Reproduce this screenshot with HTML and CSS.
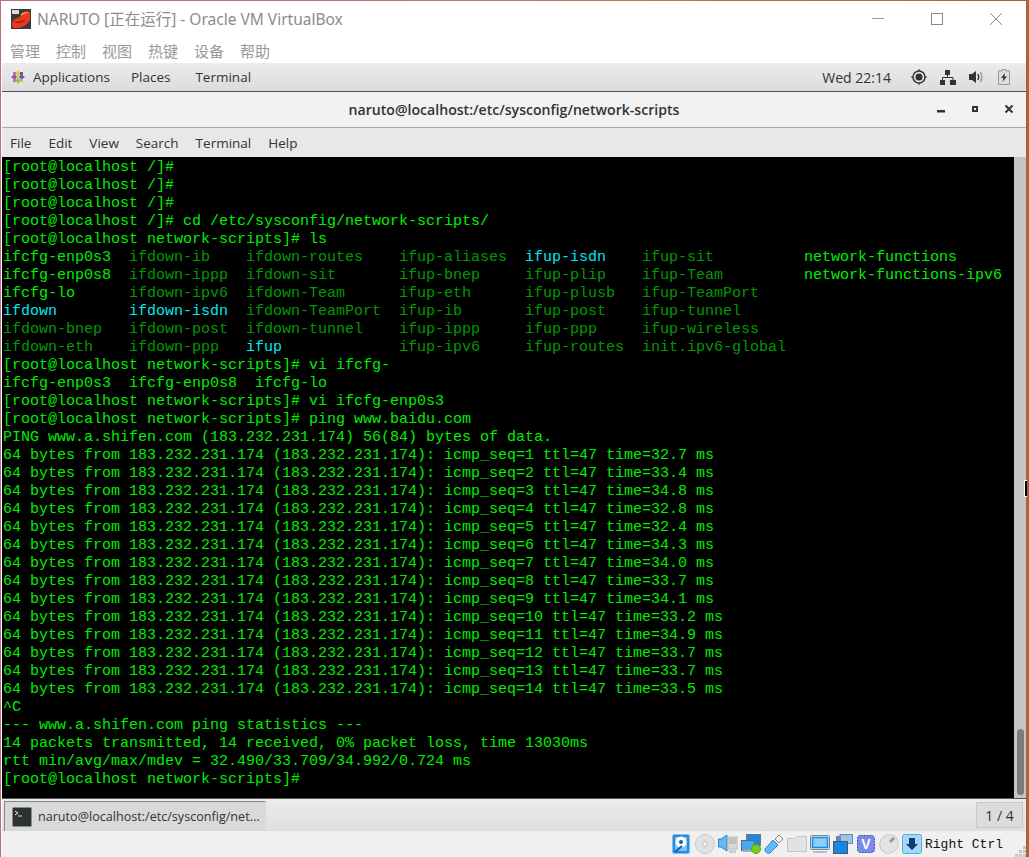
FILE: index.html
```html
<!doctype html>
<html lang="en">
<head>
  <meta charset="UTF-8">
  <title>NARUTO - Oracle VM VirtualBox</title>
  <link rel="stylesheet" href="styles.css">
</head>
<body>
  <div class="vbox">
    <!-- host window title -->
    <div class="titlebar">
      <svg class="applogo" width="20" height="20" viewBox="0 0 20 20">
        <rect width="20" height="20" fill="#3a3a3a"/>
        <rect x="1" y="1" width="7" height="4" fill="#dcdcdc"/>
        <path d="M1 14 C3 9 7 9 9 8 C10 3 15 1 19 3 L19 11 C16 17 8 20 3 19 C1 18 1 16 1 14Z" fill="#e8391a"/>
        <path d="M3 13 C7 15 12 14 15 10 C12 12 7 13 3 13Z" fill="#8e1a0c"/>
        <path d="M10 5 C12 3 16 3 18 4 C15 4 12 5 10 7Z" fill="#f9966a"/>
      </svg>
      <span class="apptitle">NARUTO [正在运行] - Oracle VM VirtualBox</span>
      <div class="winbtns">
        <svg width="14" height="14" viewBox="0 0 14 14"><path d="M1 6.5H13" stroke="#9a9a9a" fill="none"/></svg>
        <svg width="14" height="14" viewBox="0 0 14 14"><rect x="1.5" y="1.5" width="11" height="11" stroke="#8a8a8a" fill="none"/></svg>
        <svg width="14" height="14" viewBox="0 0 14 14"><path d="M1 1L13 13M13 1L1 13" stroke="#8a8a8a" fill="none"/></svg>
      </div>
    </div>
    <div class="hostmenu">
      <span>管理</span><span>控制</span><span>视图</span><span>热键</span><span>设备</span><span>帮助</span>
    </div>

    <div class="guest">
      <!-- gnome top bar -->
      <div class="topbar">
        <svg class="footicon" width="14" height="14" viewBox="0 0 14 14">
          <path d="M7 0L9.5 3.5L7 6.5L4.5 3.5Z" fill="#d8c84a"/>
          <path d="M0 7L3.5 4.5L6.5 7L3.5 9.5Z" fill="#a84aa8"/>
          <path d="M14 7L10.5 4.5L7.5 7L10.5 9.5Z" fill="#6a5aa8"/>
          <path d="M7 14L9.5 10.5L7 7.5L4.5 10.5Z" fill="#8ac84a"/>
          <rect x="2" y="2" width="3" height="3" fill="#c86ab0"/>
          <rect x="9" y="2" width="3" height="3" fill="#7a4a9a"/>
          <rect x="2" y="9" width="3" height="3" fill="#7aa86a"/>
          <rect x="9" y="9" width="3" height="3" fill="#e8b84a"/>
        </svg>
        <span class="topitem first">Applications</span>
        <span class="topitem">Places</span>
        <span class="topitem">Terminal</span>
        <span class="clock">Wed 22:14</span>
        <div class="tray">
          <svg width="16" height="16" viewBox="0 0 16 16"><circle cx="8" cy="8" r="6" fill="none" stroke="#333" stroke-width="1.5"/><circle cx="8" cy="8" r="3.5" fill="#333"/><path d="M8 0V2M8 14V16M0 8H2M14 8H16" stroke="#333"/></svg>
          <svg width="16" height="16" viewBox="0 0 16 16"><path d="M5 1h5v5H5zM0 11h5v5H0zM10 11h6v5h-6z" fill="#333"/><path d="M7.5 6V9M2.5 11V8.5H13V11" stroke="#333" fill="none"/></svg>
          <svg width="16" height="16" viewBox="0 0 16 16"><path d="M0 5H3L7 2V14L3 11H0Z" fill="#333"/><path d="M9 5C10 7 10 9 9 11" stroke="#333" stroke-width="1.5" fill="none"/><path d="M11.5 3C13 6 13 10 11.5 13" stroke="#999" stroke-width="1.5" fill="none"/></svg>
          <svg width="12" height="16" viewBox="0 0 12 16"><path d="M4 0.5H8V2H11.5V15.5H0.5V2H4Z" fill="#ddd" stroke="#999"/><path d="M7 4L3 9H5.5L4.5 13L9 7.5H6.5Z" fill="#333"/></svg>
        </div>
      </div>

      <!-- terminal window -->
      <div class="termtitle">
        <span class="termname">naruto@localhost:/etc/sysconfig/network-scripts</span>
        <div class="termbtns">
          <svg width="10" height="10" viewBox="0 0 10 10"><rect x="1" y="6" width="8" height="2.5" fill="#333"/></svg>
          <svg width="10" height="10" viewBox="0 0 10 10"><path d="M2 2H8V8H2ZM4 4V6H6V4Z" fill="#333" fill-rule="evenodd"/></svg>
          <svg width="10" height="10" viewBox="0 0 10 10"><path d="M1.5 1.5L8.5 8.5M8.5 1.5L1.5 8.5" stroke="#333" stroke-width="2"/></svg>
        </div>
      </div>
      <div class="termmenu">
        <span>File</span><span>Edit</span><span>View</span><span>Search</span><span>Terminal</span><span>Help</span>
      </div>
      <div class="termbody">
        <div class="screen">
          <div>[root@localhost /]#</div>
          <div>[root@localhost /]#</div>
          <div>[root@localhost /]#</div>
          <div>[root@localhost /]# cd /etc/sysconfig/network-scripts/</div>
          <div>[root@localhost network-scripts]# ls</div>
          <div class="lsrow"><span>ifcfg-enp0s3</span><b>ifdown-ib</b><b>ifdown-routes</b><b>ifup-aliases</b><i>ifup-isdn</i><b>ifup-sit</b><span>network-functions</span></div>
          <div class="lsrow"><span>ifcfg-enp0s8</span><b>ifdown-ippp</b><b>ifdown-sit</b><b>ifup-bnep</b><b>ifup-plip</b><b>ifup-Team</b><span>network-functions-ipv6</span></div>
          <div class="lsrow"><span>ifcfg-lo</span><b>ifdown-ipv6</b><b>ifdown-Team</b><b>ifup-eth</b><b>ifup-plusb</b><b>ifup-TeamPort</b></div>
          <div class="lsrow"><i>ifdown</i><i>ifdown-isdn</i><b>ifdown-TeamPort</b><b>ifup-ib</b><b>ifup-post</b><b>ifup-tunnel</b></div>
          <div class="lsrow"><b>ifdown-bnep</b><b>ifdown-post</b><b>ifdown-tunnel</b><b>ifup-ippp</b><b>ifup-ppp</b><b>ifup-wireless</b></div>
          <div class="lsrow"><b>ifdown-eth</b><b>ifdown-ppp</b><i>ifup</i><b>ifup-ipv6</b><b>ifup-routes</b><b>init.ipv6-global</b></div>
          <div>[root@localhost network-scripts]# vi ifcfg-</div>
          <div>ifcfg-enp0s3  ifcfg-enp0s8  ifcfg-lo</div>
          <div>[root@localhost network-scripts]# vi ifcfg-enp0s3</div>
          <div>[root@localhost network-scripts]# ping www.baidu.com</div>
          <div>PING www.a.shifen.com (183.232.231.174) 56(84) bytes of data.</div>
          <div>64 bytes from 183.232.231.174 (183.232.231.174): icmp_seq=1 ttl=47 time=32.7 ms</div>
          <div>64 bytes from 183.232.231.174 (183.232.231.174): icmp_seq=2 ttl=47 time=33.4 ms</div>
          <div>64 bytes from 183.232.231.174 (183.232.231.174): icmp_seq=3 ttl=47 time=34.8 ms</div>
          <div>64 bytes from 183.232.231.174 (183.232.231.174): icmp_seq=4 ttl=47 time=32.8 ms</div>
          <div>64 bytes from 183.232.231.174 (183.232.231.174): icmp_seq=5 ttl=47 time=32.4 ms</div>
          <div>64 bytes from 183.232.231.174 (183.232.231.174): icmp_seq=6 ttl=47 time=34.3 ms</div>
          <div>64 bytes from 183.232.231.174 (183.232.231.174): icmp_seq=7 ttl=47 time=34.0 ms</div>
          <div>64 bytes from 183.232.231.174 (183.232.231.174): icmp_seq=8 ttl=47 time=33.7 ms</div>
          <div>64 bytes from 183.232.231.174 (183.232.231.174): icmp_seq=9 ttl=47 time=34.1 ms</div>
          <div>64 bytes from 183.232.231.174 (183.232.231.174): icmp_seq=10 ttl=47 time=33.2 ms</div>
          <div>64 bytes from 183.232.231.174 (183.232.231.174): icmp_seq=11 ttl=47 time=34.9 ms</div>
          <div>64 bytes from 183.232.231.174 (183.232.231.174): icmp_seq=12 ttl=47 time=33.7 ms</div>
          <div>64 bytes from 183.232.231.174 (183.232.231.174): icmp_seq=13 ttl=47 time=33.7 ms</div>
          <div>64 bytes from 183.232.231.174 (183.232.231.174): icmp_seq=14 ttl=47 time=33.5 ms</div>
          <div>^C</div>
          <div>--- www.a.shifen.com ping statistics ---</div>
          <div>14 packets transmitted, 14 received, 0% packet loss, time 13030ms</div>
          <div>rtt min/avg/max/mdev = 32.490/33.709/34.992/0.724 ms</div>
          <div>[root@localhost network-scripts]#</div>
        </div>
        <div class="scrollbar"><div class="thumb"></div></div>
      </div>

      <!-- gnome window list -->
      <div class="taskbar">
        <div class="task">
          <svg width="20" height="20" viewBox="0 0 20 20"><rect x="0.5" y="0.5" width="19" height="19" rx="1" fill="#2c3230" stroke="#8a8a8a"/><path d="M3 4L6 6L3 8" stroke="#eee" fill="none"/><path d="M6 9H10" stroke="#ddd"/></svg>
          <span>naruto@localhost:/etc/sysconfig/net...</span>
        </div>
        <div class="pager">1 / 4</div>
      </div>
    </div>

    <!-- vbox status bar -->
    <div class="statusbar">
      <svg width="20" height="20" viewBox="0 0 20 20"><rect x="0.5" y="0.5" width="17" height="19" rx="2" fill="#2a8ae0" stroke="#7ac0f0"/><path d="M3 3H15V17H3Z" fill="#7cc4f4"/><circle cx="9" cy="8" r="5.5" fill="#fff"/><circle cx="9" cy="8" r="2" fill="#1a5aa8"/><path d="M3 18L10 12" stroke="#1a5aa8" stroke-width="2"/></svg>
      <svg width="20" height="20" viewBox="0 0 20 20"><circle cx="10" cy="10" r="9.5" fill="#e2e2e2" stroke="#c8c8c8"/><circle cx="10" cy="10" r="2.5" fill="#f4f4f4" stroke="#bbb"/></svg>
      <svg width="20" height="20" viewBox="0 0 20 20"><path d="M0.5 5H3L9 1V17L3 13H0.5Z" fill="#6ab8f0" stroke="#2a88d8"/><rect x="10" y="3" width="9" height="12" fill="#d8d8d8" stroke="#bbb"/><path d="M11 5H18M11 7H18M11 9H18" stroke="#aaa"/><rect x="11" y="16" width="7" height="3" fill="#ccc"/></svg>
      <svg width="20" height="20" viewBox="0 0 20 20"><rect x="5.5" y="0.5" width="14" height="11" fill="#1e88e0" stroke="#777"/><rect x="0.5" y="6.5" width="13" height="10" fill="#48a8f0" stroke="#666"/><rect x="2" y="16" width="10" height="2" fill="#aaa"/><circle cx="15" cy="15" r="4.5" fill="#7ccc18" stroke="#5aa010"/></svg>
      <svg width="20" height="20" viewBox="0 0 20 20"><path d="M1 15L9 6L14 11L6 19C4 20 0 18 1 15Z" fill="#68baf2" stroke="#2a88d8"/><path d="M11 5L15 1L19 5L15 9Z" fill="#eee" stroke="#888"/></svg>
      <svg width="20" height="20" viewBox="0 0 20 20"><path d="M0.5 4.5H8L10 2.5H19.5V17.5H0.5Z" fill="#e2e2e2" stroke="#c4c4c4"/></svg>
      <svg width="20" height="20" viewBox="0 0 20 20"><rect x="0.5" y="1.5" width="19" height="14" rx="1" fill="#e8e8e8" stroke="#6a8aa0"/><rect x="2.5" y="3.5" width="15" height="10" fill="#8cd0f8" stroke="#1e88e0" stroke-width="1.5"/><path d="M3 17H17V19H3Z" fill="#bbb"/></svg>
      <svg width="20" height="20" viewBox="0 0 20 20"><rect x="7" y="0.5" width="12.5" height="9" fill="#9cc4ee" stroke="#6a8aa8"/><rect x="3" y="2" width="5" height="6" fill="#5a8ac8"/><rect x="0.5" y="7.5" width="14" height="12" fill="#1488e8" stroke="#555"/></svg>
      <svg width="20" height="20" viewBox="0 0 20 20"><rect x="1.5" y="1.5" width="17" height="17" rx="3" fill="#7a8ae8" stroke="#3a4ab0" stroke-dasharray="2 1"/><text class="vtext" x="10" y="15">V</text></svg>
      <svg width="20" height="20" viewBox="0 0 20 20"><ellipse cx="10" cy="10" rx="9.5" ry="9" transform="rotate(-40 10 10)" fill="#e4e4e4" stroke="#c8c8c8"/><path d="M11 8L15 4" stroke="#999" stroke-width="3"/></svg>
      <svg width="20" height="20" viewBox="0 0 20 20"><rect x="0.5" y="0.5" width="19" height="19" rx="2" fill="#a8d8f8" stroke="#58a8e8"/><path d="M7 4H13V10H16L10 16L4 10H7Z" fill="#123a78"/></svg>
      <span class="hostkey">Right Ctrl</span>
      <svg class="grip" width="12" height="11" viewBox="0 0 12 11"><path d="M8 0h3v3H8zM4 4h3v3H4zM8 4h3v3H8zM0 8h3v3H0zM4 8h3v3H4zM8 8h3v3H8z" fill="#c4c4c4"/></svg>
    </div>
  </div>
  <div class="resizecursor"></div>
</body>
</html>
```
FILE: styles.css
```css
*
{
  margin: 0;
  padding: 0;
  box-sizing: border-box;
}
body
{
  width: 1029px;
  height: 857px;
  overflow: hidden;
  padding: 1px 3px 0 1px;
  background: linear-gradient(90deg, #b8707e 0%, #c07a6a 50%, #b05f38 100%);
  font-family: "Open Sans", "Noto Sans CJK SC", sans-serif;
}
.vbox
{
  height: 856px;
  display: flex;
  flex-direction: column;
  background: #fff;
}
.titlebar
{
  height: 36px;
  flex: none;
  display: flex;
  align-items: center;
  padding-left: 10px;
}
.applogo
{
  margin-right: 6px;
}
.apptitle
{
  font-family: "Noto Sans", "Noto Sans CJK SC", sans-serif;
  font-size: 15.5px;
  line-height: 20px;
  margin-top: -1px;
  color: #8c8c8c;
}
.winbtns
{
  margin-left: auto;
  display: flex;
  gap: 45px;
  padding-right: 23px;
}
.hostmenu
{
  height: 26px;
  flex: none;
  display: flex;
  align-items: center;
  gap: 16px;
  padding-left: 9px;
  font-family: "Noto Sans CJK SC", sans-serif;
  font-size: 15px;
  color: #999;
}
.guest
{
  flex: 1;
  display: flex;
  flex-direction: column;
  margin-left: 1px;
  background: #f0f0f0;
}
.topbar
{
  height: 29px;
  flex: none;
  display: flex;
  align-items: center;
  padding-left: 9px;
  background: linear-gradient(#ececec, #dcdcdc);
  border-bottom: 1px solid #555;
  font-size: 13.5px;
  color: #333;
}
.footicon
{
  margin-right: 8px;
}
.topitem
{
  margin-right: 25px;
  margin-top: 1px;
  line-height: 1;
}
.topitem.first
{
  margin-right: 21px;
}
.clock
{
  margin-left: auto;
  margin-right: 20px;
  font-size: 14px;
}
.tray
{
  display: flex;
  align-items: center;
  gap: 13px;
  padding-right: 16px;
}
.termtitle
{
  height: 36px;
  flex: none;
  position: relative;
  display: flex;
  align-items: center;
  justify-content: center;
  background: #f2f2f2;
  border-bottom: 1px solid #aaa;
}
.termname
{
  font-size: 14.1px;
  font-weight: 600;
  color: #333;
}
.termbtns
{
  position: absolute;
  right: 12px;
  top: 12px;
  display: flex;
  gap: 24px;
}
.termmenu
{
  height: 29px;
  flex: none;
  display: flex;
  align-items: center;
  gap: 17px;
  padding-left: 8px;
  background: #e8e8e8;
  font-size: 13.5px;
  color: #333;
}
.termbody
{
  height: 641px;
  flex: none;
  display: flex;
  background: #000;
}
.screen
{
  flex: 1;
  padding: 2px 0 0 1px;
  font-family: "Liberation Mono", monospace;
  font-size: 15px;
  line-height: 18px;
  color: #00ee00;
  overflow: hidden;
}
.screen > div
{
  height: 18px;
  white-space: pre;
}
/* ls columns, 9px per character */
.screen > .lsrow
{
  display: grid;
  grid-template-columns: 126px 117px 153px 126px 117px 162px auto;
}
.lsrow b
{
  font-weight: normal;
  color: #009a00;
}
.lsrow i
{
  font-style: normal;
  color: #00e8f0;
}
.scrollbar
{
  width: 12px;
  flex: none;
  display: flex;
  flex-direction: column;
  justify-content: flex-end;
  align-items: center;
  padding-bottom: 3px;
  background: #c4c6c4;
}
.thumb
{
  width: 7px;
  height: 66px;
  border-radius: 4px;
  background: #7a7c7a;
}
.taskbar
{
  height: 33px;
  flex: none;
  display: flex;
  align-items: flex-end;
  padding-left: 2px;
  background: linear-gradient(#ececec, #dedede);
  border-top: 1px solid #555;
}
.task
{
  width: 262px;
  height: 30px;
  display: flex;
  align-items: center;
  gap: 6px;
  padding-left: 7px;
  background: #d9d9d9;
  border-left: 1px solid #888;
  border-top: 1px solid #888;
  border-top-right-radius: 2px;
  font-size: 12.6px;
  color: #333;
}
.pager
{
  width: 47px;
  height: 26px;
  margin: 0 3px 3px auto;
  display: flex;
  align-items: center;
  justify-content: center;
  background: #dcdcdc;
  border: 1px solid #c8c8c8;
  font-size: 14px;
  color: #333;
}
.statusbar
{
  height: 26px;
  flex: none;
  display: flex;
  align-items: center;
  padding-left: 671px;
  gap: 3px;
  background: #f0f0f0;
}
.statusbar svg
{
  flex: none;
}
.vtext
{
  font-family: "Liberation Sans", sans-serif;
  font-size: 14px;
  font-weight: bold;
  fill: #fff;
  text-anchor: middle;
}
.hostkey
{
  font-family: "Liberation Mono", monospace;
  font-size: 13px;
  color: #111;
  white-space: nowrap;
}
.grip
{
  margin-left: 9px;
  align-self: flex-end;
}
.resizecursor
{
  position: absolute;
  left: 1024px;
  top: 480px;
  width: 3px;
  height: 17px;
  background: #000;
  border: 1px solid #fff;
  border-right: none;
}
```
